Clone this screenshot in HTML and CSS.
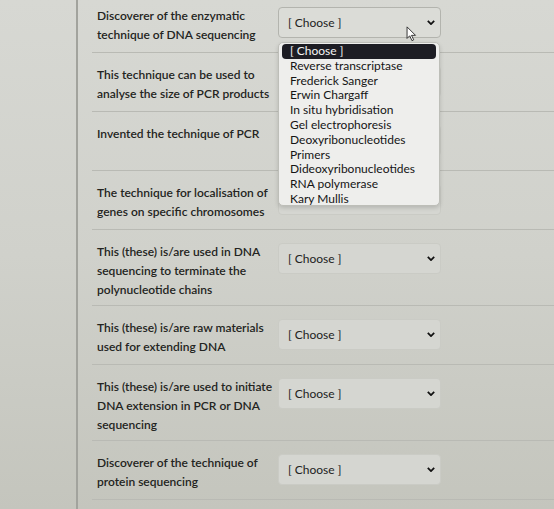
FILE: index.html
```html
<!DOCTYPE html>
<html>
<head>
<meta charset="utf-8">
<link rel="stylesheet" href="styles.css">
</head>
<body>
<div class="page">
  <div class="content">
    <div class="rows">
      <div class="row">
        <div class="q">Discoverer of the enzymatic technique of DNA sequencing</div>
        <div class="sel active"><span>[ Choose ]</span><svg class="chev" viewBox="0 0 10 6" width="8" height="5"><path d="M1 1 L5 5 L9 1" fill="none" stroke="#111" stroke-width="2.2"/></svg></div>
      </div>
      <div class="row">
        <div class="q">This technique can be used to analyse the size of PCR products</div>
        <div class="sel covered"><span>[ Choose ]</span><svg class="chev" viewBox="0 0 10 6" width="8" height="5"><path d="M1 1 L5 5 L9 1" fill="none" stroke="#111" stroke-width="2.2"/></svg></div>
      </div>
      <div class="row">
        <div class="q">Invented the technique of PCR</div>
        <div class="sel covered"><span>[ Choose ]</span><svg class="chev" viewBox="0 0 10 6" width="8" height="5"><path d="M1 1 L5 5 L9 1" fill="none" stroke="#111" stroke-width="2.2"/></svg></div>
      </div>
      <div class="row">
        <div class="q">The technique for localisation of genes on specific chromosomes</div>
        <div class="sel covered"><span>[ Choose ]</span><svg class="chev" viewBox="0 0 10 6" width="8" height="5"><path d="M1 1 L5 5 L9 1" fill="none" stroke="#111" stroke-width="2.2"/></svg></div>
      </div>
      <div class="row">
        <div class="q">This (these) is/are used in DNA sequencing to terminate the polynucleotide chains</div>
        <div class="sel"><span>[ Choose ]</span><svg class="chev" viewBox="0 0 10 6" width="8" height="5"><path d="M1 1 L5 5 L9 1" fill="none" stroke="#111" stroke-width="2.2"/></svg></div>
      </div>
      <div class="row">
        <div class="q">This (these) is/are raw materials used for extending DNA</div>
        <div class="sel"><span>[ Choose ]</span><svg class="chev" viewBox="0 0 10 6" width="8" height="5"><path d="M1 1 L5 5 L9 1" fill="none" stroke="#111" stroke-width="2.2"/></svg></div>
      </div>
      <div class="row">
        <div class="q">This (these) is/are used to initiate DNA extension in PCR or DNA sequencing</div>
        <div class="sel"><span>[ Choose ]</span><svg class="chev" viewBox="0 0 10 6" width="8" height="5"><path d="M1 1 L5 5 L9 1" fill="none" stroke="#111" stroke-width="2.2"/></svg></div>
      </div>
      <div class="row">
        <div class="q">Discoverer of the technique of protein sequencing</div>
        <div class="sel"><span>[ Choose ]</span><svg class="chev" viewBox="0 0 10 6" width="8" height="5"><path d="M1 1 L5 5 L9 1" fill="none" stroke="#111" stroke-width="2.2"/></svg></div>
      </div>
    </div>
  </div>

  <ul class="dropdown">
    <li class="hl">[ Choose ]</li>
    <li>Reverse transcriptase</li>
    <li>Frederick Sanger</li>
    <li>Erwin Chargaff</li>
    <li>In situ hybridisation</li>
    <li>Gel electrophoresis</li>
    <li>Deoxyribonucleotides</li>
    <li>Primers</li>
    <li>Dideoxyribonucleotides</li>
    <li>RNA polymerase</li>
    <li>Kary Mullis</li>
  </ul>

  <svg class="cursor" viewBox="0 0 12 18" width="11" height="16"><path d="M1 1 L1 14 L4 11 L6.5 16.5 L8.5 15.5 L6 10.5 L10.5 10.5 Z" fill="#fff" stroke="#222" stroke-width="1"/></svg>
</div>
</body>
</html>
```

FILE: styles.css
```css
* { box-sizing: border-box; }
html, body {
  margin: 0;
  padding: 0;
  width: 554px;
  height: 509px;
  overflow: hidden;
}
body {
  font-family: Lato, "Open Sans", "Liberation Sans", sans-serif;
  color: #1f201e;
  background: linear-gradient(180deg, #d7d8d3 0%, #d0d1cb 50%, #c4c5bd 100%);
}
.page {
  position: relative;
  display: flex;
  height: 509px;
  padding-left: 76px;
}
.content {
  flex: 1;
  border-left: 2px solid #a2a39d;
  padding-left: 14px;
}
.rows {
  margin-top: -6px;
}
.row {
  display: flex;
  align-items: flex-start;
  padding: 12px 0 6px 5px;
  border-bottom: 1px solid #b9bab4;
}
.q {
  width: 181px;
  min-height: 40px;
  padding-right: 4px;
  font-size: 12px;
  line-height: 19px;
  font-weight: 600;
  color: #232421;
}
.sel {
  margin-top: 1px;
  width: 163px;
  height: 31px;
  display: flex;
  align-items: center;
  justify-content: space-between;
  padding: 0 5px 0 9px;
  border: 1px solid #cacbc5;
  border-radius: 4px;
  background: #d5d6d1;
  font-size: 12px;
  color: #222;
}
.sel.active {
  background: #dbdcd7;
  border-color: #b3b4ae;
}
.sel.covered span,
.sel.covered .chev { visibility: hidden; }
.chev { display: block; }
.dropdown {
  position: absolute;
  left: 278px;
  top: 42px;
  width: 162px;
  height: 164px;
  margin: 0;
  padding: 1px 3px;
  list-style: none;
  background: #eeeeec;
  border: 1px solid #bdbeb8;
  border-radius: 5px;
  box-shadow: 0 2px 4px rgba(0,0,0,0.15);
  font-size: 12px;
  line-height: 14.8px;
  color: #151515;
}
.dropdown li {
  padding-left: 8px;
  white-space: nowrap;
}
.dropdown li.hl {
  background: #1d1d24;
  color: #f4f4f4;
  border-radius: 4px;
}
.cursor {
  position: absolute;
  left: 406px;
  top: 26px;
}
```
